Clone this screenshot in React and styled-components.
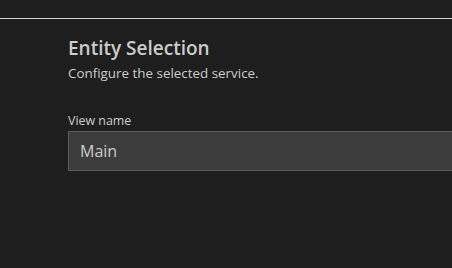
import styled, { createGlobalStyle } from "styled-components";

const GlobalStyle = createGlobalStyle`
  html, body {
    margin: 0;
    padding: 0;
    background: #1e1e1e;
    overflow: hidden;
  }
  body {
    font-family: "Open Sans", "Noto Sans", sans-serif;
  }
`;

const Page = styled.div`
  width: 452px;
  height: 268px;
  background: #1e1e1e;
  overflow: hidden;
`;

const TopBar = styled.div`
  height: 18px;
  border-bottom: 1px solid #d4d4d4;
`;

const Content = styled.div`
  padding: 16px 0 0 68px;
  display: flex;
  flex-direction: column;
`;

const Title = styled.h1`
  margin: 0;
  font-size: 19px;
  font-weight: 600;
  line-height: 26px;
  color: #cccccc;
`;

const Subtitle = styled.p`
  margin: 3px 0 0;
  font-size: 13.4px;
  line-height: 19px;
  color: #cccccc;
`;

const Label = styled.label`
  margin-top: 29px;
  font-size: 12.4px;
  line-height: 17px;
  color: #cccccc;
`;

const Input = styled.input`
  margin-top: 2px;
  width: 420px;
  height: 40px;
  box-sizing: border-box;
  padding: 0 11px;
  background: #3c3c3c;
  border: 1px solid #5a5a5a;
  border-right: none;
  color: #cccccc;
  font-family: "Open Sans", "Noto Sans", sans-serif;
  font-size: 16px;
  outline: none;
`;

export default function App() {
  return (
    <Page>
      <GlobalStyle />
      <TopBar />
      <Content>
        <Title>Entity Selection</Title>
        <Subtitle>Configure the selected service.</Subtitle>
        <Label>View name</Label>
        <Input defaultValue="Main" />
      </Content>
    </Page>
  );
}
